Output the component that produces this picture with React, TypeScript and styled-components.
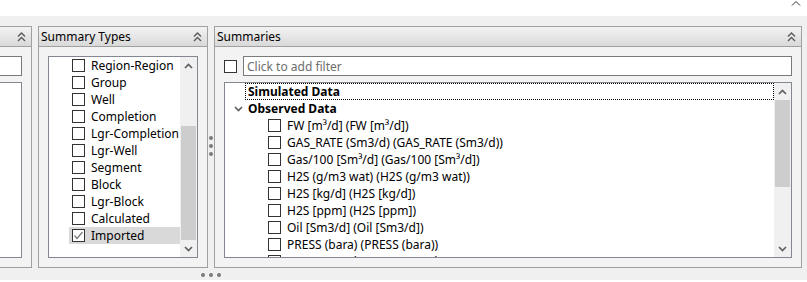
import React from "react";
import styled, { createGlobalStyle } from "styled-components";

const GlobalStyle = createGlobalStyle`
  html, body { margin: 0; padding: 0; background: #fff; }
  body {
    font-family: "Noto Sans", "Open Sans", sans-serif;
    font-size: 12px;
    color: #000;
  }
  * { box-sizing: border-box; }
`;

const Window = styled.div`
  width: 807px; height: 282px;
  display: flex; flex-direction: column;
  overflow: hidden; background: #fff;
`;

const TopBar = styled.div`
  height: 16px; flex: none;
  display: flex; justify-content: flex-end; align-items: flex-start;
  padding-right: 6px;
`;

const Dock = styled.div`
  height: 264px; flex: none;
  background: #f0f0f0;
  padding-top: 10px;
  display: flex; flex-direction: column;
`;

const PanelRow = styled.div`
  height: 242px;
  display: flex;
  margin-left: -100px;
`;

const Panel = styled.div<{ $w: number }>`
  width: ${({ $w }) => $w}px; flex: none;
  border: 1px solid #a0a0a0;
  background: #f3f3f3;
  display: flex; flex-direction: column;
`;

const Header = styled.div`
  height: 20px; flex: none;
  display: flex; align-items: center; justify-content: space-between;
  padding: 0 5px 0 2px;
  background: linear-gradient(#f3f3f3, #d9d9d9);
  border-bottom: 1px solid #a0a0a0;
  font-size: 12px; white-space: nowrap;
`;

const Body = styled.div`
  flex: 1; min-height: 0;
  padding: 9px;
  display: flex; flex-direction: column; gap: 6px;
`;

const Splitter = styled.div`
  width: 6px; flex: none;
  display: flex; flex-direction: column; align-items: center; justify-content: center;
  gap: 4px;
  padding-bottom: 3px;
`;

const Dot = styled.span`
  width: 4px; height: 4px; border-radius: 50%;
  background: #7a7a7a;
`;

const BottomBar = styled.div`
  flex: 1;
  display: flex; align-items: center; gap: 4px;
  padding-left: 201px; padding-top: 1px;
`;

const Box = styled.div`
  flex: 1; min-height: 0;
  border: 1px solid #828790;
  background: #fff;
  display: flex;
  overflow: hidden;
`;

const FilterRow = styled.div`
  height: 20px; flex: none;
  display: flex; align-items: center; gap: 6px;
`;

const FilterInput = styled.div<{ $grow?: boolean }>`
  flex: ${({ $grow }) => ($grow ? "1" : "none")};
  height: 20px;
  border: 1px solid #7a7a7a;
  background: #fff;
  color: #6d6d6d;
  padding-left: 3px;
  display: flex; align-items: center;
`;

const List = styled.div`
  flex: 1; min-width: 0;
  display: flex; flex-direction: column;
`;

const Row = styled.div<{ $indent: number; $sel?: boolean; $focus?: boolean; $bold?: boolean }>`
  height: 17px; flex: none;
  display: flex; align-items: center; gap: 6px;
  margin-left: ${({ $indent }) => $indent}px;
  padding-left: 3px;
  background: ${({ $sel }) => ($sel ? "#d9d9d9" : "transparent")};
  outline: ${({ $focus }) => ($focus ? "1px dotted #000" : "none")};
  outline-offset: -1px;
  font-weight: ${({ $bold }) => ($bold ? 700 : 400)};
  white-space: nowrap;
`;

const Expander = styled.span`
  width: 20px; margin-left: -20px; margin-right: -6px;
  display: flex; justify-content: center;
`;

const Check = styled.span`
  width: 13px; height: 13px; flex: none;
  border: 1px solid #333;
  background: #fff;
  display: flex; align-items: center; justify-content: center;
`;

const ScrollBar = styled.div`
  width: 17px; flex: none;
  background: #f0f0f0;
  display: flex; flex-direction: column;
`;

const Arrow = styled.div`
  height: 17px; flex: none;
  display: flex; align-items: center; justify-content: center;
`;

const Track = styled.div<{ $end?: boolean }>`
  flex: 1;
  display: flex; flex-direction: column;
  justify-content: ${({ $end }) => ($end ? "flex-end" : "flex-start")};
`;

const Thumb = styled.div`
  margin: 0 1px;
  background: #cdcdcd;
`;

const Collapse = () => (
  <svg width="9" height="10" viewBox="0 0 9 10">
    <polyline points="1,4.5 4.5,1 8,4.5" fill="none" stroke="#5a5a5a" strokeWidth="1.4" />
    <polyline points="1,9 4.5,5.5 8,9" fill="none" stroke="#5a5a5a" strokeWidth="1.4" />
  </svg>
);

const Chevron = ({ up }: { up?: boolean }) => (
  <svg width="9" height="6" viewBox="0 0 9 6">
    <polyline
      points={up ? "1,5 4.5,1.5 8,5" : "1,1 4.5,4.5 8,1"}
      fill="none" stroke="#606060" strokeWidth="1.7"
    />
  </svg>
);

const Scroller = ({ thumb, end }: { thumb: number; end?: boolean }) => (
  <ScrollBar>
    <Arrow><Chevron up /></Arrow>
    <Track $end={end}>
      <Thumb style={{ height: thumb }} />
    </Track>
    <Arrow><Chevron /></Arrow>
  </ScrollBar>
);

const CheckBox = ({ on }: { on?: boolean }) => (
  <Check>
    {on && (
      <svg width="11" height="11" viewBox="0 0 11 11">
        <polyline points="1.5,5.5 4,8.5 9.5,2" fill="none" stroke="#777" strokeWidth="1.2" />
      </svg>
    )}
  </Check>
);

const types = [
  "Region-Region", "Group", "Well", "Completion", "Lgr-Completion", "Lgr-Well",
  "Segment", "Block", "Lgr-Block", "Calculated", "Imported",
];

const observed = [
  "FW [m³/d] (FW [m³/d])",
  "GAS_RATE (Sm3/d) (GAS_RATE (Sm3/d))",
  "Gas/100 [Sm³/d] (Gas/100 [Sm³/d])",
  "H2S (g/m3 wat) (H2S (g/m3 wat))",
  "H2S [kg/d] (H2S [kg/d])",
  "H2S [ppm] (H2S [ppm])",
  "Oil [Sm3/d] (Oil [Sm3/d])",
  "PRESS (bara) (PRESS (bara))",
  "RESV [rm3/d] (RESV [rm3/d])",
];

export default function App() {
  return (
    <Window>
      <GlobalStyle />
      <TopBar>
        <svg width="10" height="6" viewBox="0 0 10 6">
          <polyline points="1,5.5 5,1.5 9,5.5" fill="none" stroke="#333" strokeWidth="1" />
        </svg>
      </TopBar>
      <Dock>
        <PanelRow>
          <Panel $w={132}>
            <Header><span /><Collapse /></Header>
            <Body>
              <FilterInput />
              <Box />
            </Body>
          </Panel>
          <Splitter />
          <Panel $w={170}>
            <Header><span>Summary Types</span><Collapse /></Header>
            <Body>
              <Box>
                <List>
                  {types.map((t) => (
                    <Row key={t} $indent={20} $sel={t === "Imported"}>
                      <CheckBox on={t === "Imported"} />
                      {t}
                    </Row>
                  ))}
                </List>
                <Scroller thumb={114} end />
              </Box>
            </Body>
          </Panel>
          <Splitter>
            <Dot /><Dot /><Dot />
          </Splitter>
          <Panel $w={588}>
            <Header><span>Summaries</span><Collapse /></Header>
            <Body>
              <FilterRow>
                <CheckBox />
                <FilterInput $grow>Click to add filter</FilterInput>
              </FilterRow>
              <Box>
                <List>
                  <Row $indent={20} $bold $focus>Simulated Data</Row>
                  <Row $indent={20} $bold>
                    <Expander><Chevron /></Expander>
                    Observed Data
                  </Row>
                  {observed.map((o) => (
                    <Row key={o} $indent={40}>
                      <CheckBox />
                      {o}
                    </Row>
                  ))}
                </List>
                <Scroller thumb={87} />
              </Box>
            </Body>
          </Panel>
        </PanelRow>
        <BottomBar>
          <Dot /><Dot /><Dot />
        </BottomBar>
      </Dock>
    </Window>
  );
}
